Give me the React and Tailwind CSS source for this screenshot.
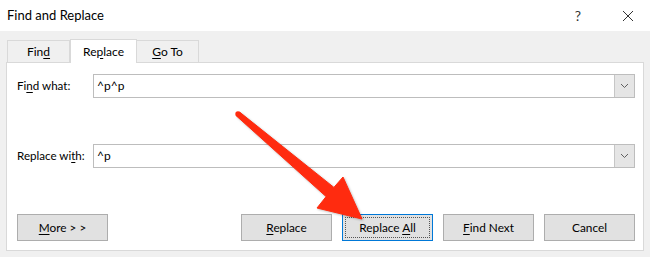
import React from 'react'

const font = { fontFamily: 'Lato, "Noto Sans", Arial, sans-serif' }

const Key = ({ children }) => <span className="underline underline-offset-2">{children}</span>

const Combo = ({ value }) => (
  <div className="flex-1 h-[24px] flex border border-[#bdbdbd] bg-white">
    <div className="flex-1 px-[3px] leading-[22px] text-[12px]">{value}</div>
    <div className="w-[20px] flex items-center justify-center bg-[#e5e5e5] border-l border-[#c6c6c6]">
      <svg width="9" height="6" viewBox="0 0 9 6">
        <path d="M1 1 L4.5 4.5 L8 1" fill="none" stroke="#606060" strokeWidth="1" />
      </svg>
    </div>
  </div>
)

const Btn = ({ children, primary }) => (
  <button
    className={`w-[91px] h-[27px] bg-[#e1e1e1] border text-[11.8px] text-black ${
      primary ? 'border-[#0078d7] p-[2px]' : 'border-[#adadad]'
    }`}
  >
    {primary ? (
      <span className="flex items-center justify-center w-full h-full border border-dotted border-[#555]">
        <span>{children}</span>
      </span>
    ) : (
      children
    )}
  </button>
)

export default function App() {
  return (
    <div className="relative w-[650px] h-[257px] bg-[#f0f0f0] text-[11.6px] text-black overflow-hidden" style={font}>
      {/* Title bar */}
      <div className="h-[31px] bg-white flex items-center pl-[7px] pr-[16px]">
        <span className="flex-1 text-[13px]">Find and Replace</span>
        <span className="text-[14px] text-[#333] mr-[41px]">?</span>
        <svg width="12" height="12" viewBox="0 0 12 12">
          <path d="M1 1 L11 11 M11 1 L1 11" stroke="#333" strokeWidth="1" />
        </svg>
      </div>

      <div className="px-[6px] pt-[8px]">
        {/* Tabs */}
        <div className="flex items-end h-[23px] pl-[1px] relative z-10">
          <div className="w-[63px] h-[22px] flex items-center justify-center border border-b-0 border-[#d9d9d9] bg-[#f0f0f0] text-[12px]">
            <span>Fin<Key>d</Key></span>
          </div>
          <div className="w-[67px] h-[24px] -mb-[1px] flex items-center justify-center border border-b-0 border-[#d9d9d9] bg-white text-[12px]">
            <span>Re<Key>p</Key>lace</span>
          </div>
          <div className="w-[62px] h-[22px] flex items-center justify-center border border-b-0 border-l-0 border-[#d9d9d9] bg-[#f0f0f0] text-[12px]">
            <span><Key>G</Key>o To</span>
          </div>
        </div>

        {/* Panel */}
        <div className="w-[638px] h-[189px] bg-white border border-[#d9d9d9] pl-[10px] pr-[8px] pt-[11px]">
          <div className="flex items-center">
            <div className="w-[76px]">Fi<Key>n</Key>d what:</div>
            <Combo value="^p^p" />
          </div>
          <div className="flex items-center mt-[46px]">
            <div className="w-[76px]">Replace wi<Key>t</Key>h:</div>
            <Combo value="^p" />
          </div>
          <div className="flex mt-[46px]">
            <Btn>
              <Key>M</Key>ore &gt; &gt;
            </Btn>
            <div className="flex-1" />
            <div className="flex gap-[10px]">
              <Btn>
                <Key>R</Key>eplace
              </Btn>
              <Btn primary>
                Replace <Key>A</Key>ll
              </Btn>
              <Btn>
                <Key>F</Key>ind Next
              </Btn>
              <Btn>Cancel</Btn>
            </div>
          </div>
        </div>
      </div>

      {/* Red annotation arrow */}
      <svg className="absolute left-0 top-0 pointer-events-none" width="650" height="257" viewBox="0 0 650 257">
        <polygon
          points="239.6,112.1 333.9,187.4 343,177 362,219 317,208 326.1,196.6 236.4,115.9"
          fill="#ff2b0f"
          stroke="#ff2b0f"
          strokeWidth="1"
          strokeLinejoin="round"
          style={{ filter: 'drop-shadow(1px 1px 1px rgba(0,0,0,0.25))' }}
        />
        <circle cx="238" cy="114" r="2.7" fill="#ff2b0f" />
      </svg>
    </div>
  )
}
